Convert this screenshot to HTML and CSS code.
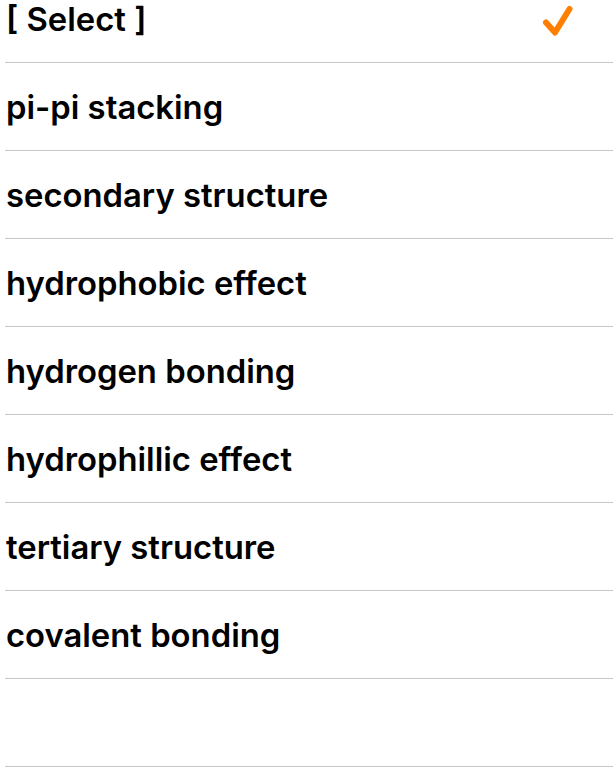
FILE: index.html
```html
<!DOCTYPE html>
<html>
<head>
<meta charset="utf-8">
<link rel="stylesheet" href="styles.css">
</head>
<body>
<ul class="list">
  <li class="row selected"><span class="label">[ Select ]</span>
    <svg class="check" width="32" height="32" viewBox="0 0 32 32"><path d="M5 18.5 L14 28.5 L28.5 5" fill="none" stroke="#ff7f00" stroke-width="6" stroke-linecap="round" stroke-linejoin="round"/></svg>
  </li>
  <li class="row"><span class="label">pi-pi stacking</span></li>
  <li class="row"><span class="label">secondary structure</span></li>
  <li class="row"><span class="label">hydrophobic effect</span></li>
  <li class="row"><span class="label">hydrogen bonding</span></li>
  <li class="row"><span class="label">hydrophillic effect</span></li>
  <li class="row"><span class="label">tertiary structure</span></li>
  <li class="row"><span class="label">covalent bonding</span></li>
  <li class="row"><span class="label"></span></li>
</ul>
</body>
</html>
```
FILE: styles.css
```css
html, body {
  margin: 0;
  padding: 0;
  background: #ffffff;
  overflow: hidden;
}
.list {
  list-style: none;
  margin: -25px 0 0 0;
  padding: 0 0 0 5px;
}
.row {
  height: 87px;
  border-bottom: 1px solid #c8c7cc;
  display: flex;
  align-items: center;
  justify-content: space-between;
  padding-right: 40px;
  font-family: Inter, "Noto Sans", sans-serif;
  font-weight: 600;
  font-size: 32.8px;
  color: #000;
}
.label {
  padding-left: 1px;
  padding-top: 1px;
}
.check {
  display: block;
  margin-top: 2px;
}
```
